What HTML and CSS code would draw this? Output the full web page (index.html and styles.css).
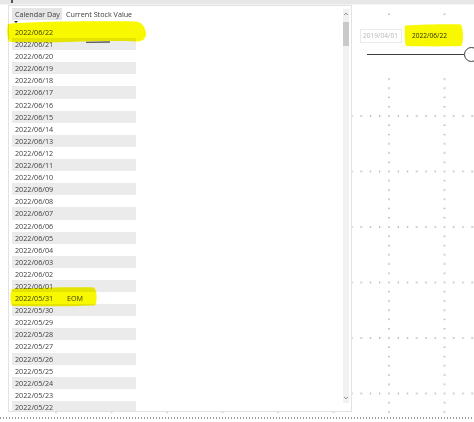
FILE: index.html
```html
<!DOCTYPE html>
<html lang="en">
<head>
<meta charset="utf-8">
<title>Stock report</title>
<link rel="stylesheet" href="styles.css">
</head>
<body>
<div class="topbar"><span class="topbar-mark"></span></div>

<svg class="grid" width="474" height="422" viewBox="0 0 474 422" aria-hidden="true">
  <defs>
    <pattern id="dots" x="-0.5" y="4" width="55.5" height="55.5" patternUnits="userSpaceOnUse">
      <g fill="#8c8c8c">
        <circle cx="1" cy="1" r="0.72"/>
        <circle cx="10.25" cy="1" r="0.72"/>
        <circle cx="19.5" cy="1" r="0.72"/>
        <circle cx="28.75" cy="1" r="0.72"/>
        <circle cx="38" cy="1" r="0.72"/>
        <circle cx="47.25" cy="1" r="0.72"/>
        <circle cx="1" cy="10.25" r="0.72"/>
        <circle cx="1" cy="19.5" r="0.72"/>
        <circle cx="1" cy="28.75" r="0.72"/>
        <circle cx="1" cy="38" r="0.72"/>
        <circle cx="1" cy="47.25" r="0.72"/>
      </g>
    </pattern>
  </defs>
  <rect x="6" y="8" width="468" height="408" fill="url(#dots)"/>
</svg>

<section class="table-visual">
  <div class="table-head">
    <div class="th th-sorted">Calendar Day<span class="sort-arrow"></span></div>
    <div class="th">Current Stock Value</div>
  </div>
  <div class="table-body">
    <div class="row"><span class="cell">2022/06/22</span><span class="cell"></span></div>
    <div class="row"><span class="cell">2022/06/21</span><span class="cell"></span></div>
    <div class="row"><span class="cell">2022/06/20</span><span class="cell"></span></div>
    <div class="row"><span class="cell">2022/06/19</span><span class="cell"></span></div>
    <div class="row"><span class="cell">2022/06/18</span><span class="cell"></span></div>
    <div class="row"><span class="cell">2022/06/17</span><span class="cell"></span></div>
    <div class="row"><span class="cell">2022/06/16</span><span class="cell"></span></div>
    <div class="row"><span class="cell">2022/06/15</span><span class="cell"></span></div>
    <div class="row"><span class="cell">2022/06/14</span><span class="cell"></span></div>
    <div class="row"><span class="cell">2022/06/13</span><span class="cell"></span></div>
    <div class="row"><span class="cell">2022/06/12</span><span class="cell"></span></div>
    <div class="row"><span class="cell">2022/06/11</span><span class="cell"></span></div>
    <div class="row"><span class="cell">2022/06/10</span><span class="cell"></span></div>
    <div class="row"><span class="cell">2022/06/09</span><span class="cell"></span></div>
    <div class="row"><span class="cell">2022/06/08</span><span class="cell"></span></div>
    <div class="row"><span class="cell">2022/06/07</span><span class="cell"></span></div>
    <div class="row"><span class="cell">2022/06/06</span><span class="cell"></span></div>
    <div class="row"><span class="cell">2022/06/05</span><span class="cell"></span></div>
    <div class="row"><span class="cell">2022/06/04</span><span class="cell"></span></div>
    <div class="row"><span class="cell">2022/06/03</span><span class="cell"></span></div>
    <div class="row"><span class="cell">2022/06/02</span><span class="cell"></span></div>
    <div class="row"><span class="cell">2022/06/01</span><span class="cell"></span></div>
    <div class="row"><span class="cell">2022/05/31</span><span class="cell">EOM</span></div>
    <div class="row"><span class="cell">2022/05/30</span><span class="cell"></span></div>
    <div class="row"><span class="cell">2022/05/29</span><span class="cell"></span></div>
    <div class="row"><span class="cell">2022/05/28</span><span class="cell"></span></div>
    <div class="row"><span class="cell">2022/05/27</span><span class="cell"></span></div>
    <div class="row"><span class="cell">2022/05/26</span><span class="cell"></span></div>
    <div class="row"><span class="cell">2022/05/25</span><span class="cell"></span></div>
    <div class="row"><span class="cell">2022/05/24</span><span class="cell"></span></div>
    <div class="row"><span class="cell">2022/05/23</span><span class="cell"></span></div>
    <div class="row"><span class="cell">2022/05/22</span><span class="cell"></span></div>
  </div>
  <div class="scrollbar">
    <svg class="scroll-arrow" width="6" height="6" viewBox="0 0 6 6"><polyline points="1.2,4 3,2.2 4.8,4" fill="none" stroke="#777" stroke-width="0.9"/></svg>
    <div class="scroll-track"><div class="scroll-thumb"></div></div>
    <svg class="scroll-arrow" width="6" height="6" viewBox="0 0 6 6"><polyline points="1.2,2 3,3.8 4.8,2" fill="none" stroke="#777" stroke-width="0.9"/></svg>
  </div>
</section>

<section class="slicer">
  <div class="slicer-dates">
    <div class="date-box date-start">2019/04/01</div>
    <div class="date-box date-end">2022/06/22</div>
  </div>
  <div class="slider">
    <div class="slider-line"></div>
    <div class="slider-handle"></div>
  </div>
</section>

<div class="canvas-edge"></div>

<svg class="marker" width="474" height="422" viewBox="0 0 474 422" aria-hidden="true">
  <g fill="#f8f800">
    <path d="M8,24 C30,21.5 90,21 136,21.5 C142,22 145,27 146,33 C146.5,38 143,41.5 137,41.5 C110,40.5 80,41.5 50,42.5 L10,42 C7,40 6.5,30 8,24 Z"/>
    <path d="M12,289 C40,287.5 75,287 94,287.5 C97,290 97.5,302 95,305.5 C70,306.5 40,306.5 12,306 C10,302 10,293 12,289 Z"/>
    <path d="M405,25.5 C425,24.5 448,24 461,24.5 C463.5,30 463.5,41 461.5,46 C445,46.5 422,46.5 406,46 C404.5,40 404.5,31 405,25.5 Z"/>
  </g>
  <path d="M86,42.4 L110,42" stroke="#3a3a3a" stroke-width="1.3" opacity="0.8"/>
</svg>
</body>
</html>
```

FILE: styles.css
```css
* {
  box-sizing: border-box;
  margin: 0;
  padding: 0;
}

html,
body {
  width: 474px;
  height: 422px;
  overflow: hidden;
  background: #ffffff;
}

body {
  position: relative;
  font-family: "Open Sans", "Noto Sans", sans-serif;
  color: #3d3d3d;
}

.topbar {
  position: relative;
  z-index: 2;
  height: 5px;
  background: #e7e7e7;
  border-bottom: 1px solid #f3f3f3;
}

.topbar-mark {
  position: absolute;
  left: 11px;
  top: 0;
  width: 2px;
  height: 3px;
  background: #555555;
}

.grid {
  position: absolute;
  left: 0;
  top: 0;
  z-index: 0;
}

/* ---------- table visual ---------- */
.table-visual {
  position: absolute;
  left: 8px;
  top: 5px;
  width: 344px;
  height: 407px;
  z-index: 1;
  background: #ffffff;
  border: 1px solid #e2e2e2;
  padding: 2px 0 0 3px;
  overflow: hidden;
}

.table-head {
  display: flex;
  height: 12px;
  font-size: 7.2px;
  line-height: 12px;
  color: #3a3a3a;
}

.th {
  padding-left: 4px;
  white-space: nowrap;
}

.th-sorted {
  position: relative;
  width: 50px;
  padding-left: 3px;
  background: #e5e5e5;
}

.sort-arrow {
  position: absolute;
  left: 2px;
  bottom: -2.5px;
  width: 0;
  height: 0;
  border-left: 2px solid transparent;
  border-right: 2px solid transparent;
  border-top: 2.5px solid #222222;
}

.table-body {
  margin-top: 6px;
  width: 124px;
}

.row {
  display: grid;
  grid-template-columns: 50px 74px;
  height: 12.1px;
  font-size: 7.2px;
  line-height: 12.1px;
  color: #404040;
  white-space: nowrap;
}

.row:nth-child(even) {
  background: #ebebeb;
}

.cell {
  padding-left: 3px;
}

.cell + .cell {
  padding-left: 5px;
}

/* scrollbar */
.scrollbar {
  position: absolute;
  top: 3px;
  right: 2px;
  width: 6px;
  height: 394px;
  display: flex;
  flex-direction: column;
  background: #f1f1f1;
}

.scroll-arrow {
  display: block;
  flex: none;
  margin: 2px 0;
}

.scroll-track {
  flex: 1;
  padding-top: 3px;
}

.scroll-thumb {
  height: 24px;
  background: #c9c9c9;
}

/* ---------- slicer ---------- */
.slicer {
  position: absolute;
  left: 352px;
  top: 18px;
  width: 130px;
  height: 57px;
  z-index: 1;
  background: #ffffff;
  padding: 11px 0 0 8px;
}

.slicer-dates {
  display: flex;
  gap: 3px;
}

.date-box {
  height: 14px;
  font-size: 6.6px;
  line-height: 12px;
  white-space: nowrap;
}

.date-start {
  width: 42px;
  padding-left: 2px;
  border: 1px solid #e9e9e9;
  color: #b9b9b9;
}

.date-end {
  width: 46px;
  padding-left: 6px;
  border: 1px solid transparent;
  color: #2c2c2c;
}

.slider {
  display: flex;
  align-items: center;
  margin-top: 4px;
  margin-left: 7px;
}

.slider-line {
  width: 97px;
  height: 1.6px;
  background: #3d3d3d;
}

.slider-handle {
  flex: none;
  width: 15px;
  height: 15px;
  border: 1.4px solid #3d3d3d;
  border-radius: 50%;
  background: #ffffff;
}

/* ---------- canvas edge ---------- */
.canvas-edge {
  position: absolute;
  left: 0;
  right: 0;
  top: 417px;
  height: 1.5px;
  background: repeating-linear-gradient(90deg, #9c9c9c 0 1.3px, transparent 1.3px 3px);
}

/* ---------- highlighter marks ---------- */
.marker {
  position: absolute;
  left: 0;
  top: 0;
  z-index: 3;
  pointer-events: none;
  mix-blend-mode: multiply;
}
```
